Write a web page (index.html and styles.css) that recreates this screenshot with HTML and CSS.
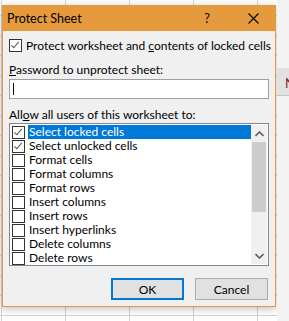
FILE: index.html
```html
<!DOCTYPE html>
<html lang="en">
  <head>
    <meta charset="UTF-8" />
    <meta name="viewport" content="width=device-width, initial-scale=1.0" />
    <title>Protect Sheet</title>
    <link rel="stylesheet" href="styles.css">
  </head>
  <body>
    <div class="screen">
      <div class="dialog">
        <div class="titlebar">
          <span class="title">Protect Sheet</span>
          <span class="help">?</span>
          <span class="close">
            <svg width="11" height="11" viewBox="0 0 11 11">
              <path d="M0.5 0.5 L10.5 10.5 M10.5 0.5 L0.5 10.5" stroke="#000" stroke-width="1.1" fill="none" />
            </svg>
          </span>
        </div>

        <div class="body">
          <div class="check-row top-check">
            <span class="box checked"></span>
            <span>Protect worksheet and <u>c</u>ontents of locked cells</span>
          </div>

          <div class="field-label"><u>P</u>assword to unprotect sheet:</div>
          <div class="input"><span class="caret"></span></div>

          <div class="field-label">All<u>o</u>w all users of this worksheet to:</div>
          <div class="listbox">
            <ul class="items">
              <li class="selected"><span class="box checked"></span><span class="item-text">Select locked cells</span></li>
              <li><span class="box checked"></span><span class="item-text">Select unlocked cells</span></li>
              <li><span class="box"></span><span class="item-text">Format cells</span></li>
              <li><span class="box"></span><span class="item-text">Format columns</span></li>
              <li><span class="box"></span><span class="item-text">Format rows</span></li>
              <li><span class="box"></span><span class="item-text">Insert columns</span></li>
              <li><span class="box"></span><span class="item-text">Insert rows</span></li>
              <li><span class="box"></span><span class="item-text">Insert hyperlinks</span></li>
              <li><span class="box"></span><span class="item-text">Delete columns</span></li>
              <li><span class="box"></span><span class="item-text">Delete rows</span></li>
            </ul>
            <div class="scrollbar">
              <span class="arrow">
                <svg width="9" height="6" viewBox="0 0 9 6"><path d="M0.5 5 L4.5 1 L8.5 5" stroke="#606060" stroke-width="1.6" fill="none" /></svg>
              </span>
              <div class="track"><div class="thumb"></div></div>
              <span class="arrow">
                <svg width="9" height="6" viewBox="0 0 9 6"><path d="M0.5 1 L4.5 5 L8.5 1" stroke="#606060" stroke-width="1.6" fill="none" /></svg>
              </span>
            </div>
          </div>

          <div class="buttons">
            <button class="btn default">OK</button>
            <button class="btn">Cancel</button>
          </div>
        </div>
      </div>

      <div class="sheet-edge">
        <div class="col-header">N</div>
      </div>
    </div>
  </body>
</html>
```

FILE: styles.css
```css
body {
  margin: 0;
  padding: 0;
  font-family: Lato, "Noto Sans", sans-serif;
  font-size: 12px;
  color: #000;
}
.screen {
  width: 289px;
  height: 321px;
  overflow: hidden;
  display: flex;
  background-color: #fff;
  /* worksheet grid behind the dialog */
  background-image:
    linear-gradient(to right, #d4d4d4 1px, transparent 1px),
    linear-gradient(to bottom, #d4d4d4 1px, transparent 1px);
  background-size: 64px 100%, 100% 20px;
  background-position: 1px 0, 0 15px;
}
.dialog {
  flex: none;
  width: 274px;
  height: 302px;
  margin: 5px 0 0 2px;
  background-color: #f0f0f0;
  border: 1px solid #e59b3d;
  border-top: none;
  box-sizing: border-box;
  box-shadow: 0 2px 8px rgba(0, 0, 0, 0.25);
  display: flex;
  flex-direction: column;
  white-space: nowrap;
}
.titlebar {
  height: 26px;
  margin: 0 -1px;
  background-color: #e59b3d;
  display: flex;
  align-items: center;
  padding: 0 0 0 5px;
  font-size: 12.5px;
}
.title {
  flex: 1;
}
.help {
  width: 10px;
  text-align: center;
  margin-right: 36px;
}
.close {
  width: 11px;
  margin-right: 17px;
  display: flex;
}
.body {
  flex: 1;
  padding: 7px 6px 0 6px;
}
.check-row {
  display: flex;
  align-items: center;
  gap: 4px;
  height: 14px;
}
.top-check {
  margin-bottom: 10px;
}
.box {
  width: 11px;
  height: 11px;
  border: 1px solid #333;
  background-color: #fff;
  flex: none;
  position: relative;
}
.checked::after {
  content: "";
  position: absolute;
  left: 3px;
  top: 0px;
  width: 3px;
  height: 7px;
  border: solid #555;
  border-width: 0 1.4px 1.4px 0;
  transform: rotate(40deg);
}
.field-label {
  height: 15px;
  line-height: 15px;
}
.input {
  height: 20px;
  margin: 2px 0 8px;
  border: 1px solid #a0a0a0;
  background-color: #fff;
  box-sizing: border-box;
  padding: 3px 3px;
}
.caret {
  display: block;
  width: 1px;
  height: 12px;
  background-color: #000;
}
.listbox {
  height: 143px;
  margin-top: 1px;
  border: 1px solid #828790;
  background-color: #fff;
  display: flex;
  box-sizing: border-box;
  padding: 1px 1px 1px 2px;
}
.items {
  flex: 1;
  list-style: none;
  margin: 0;
  padding: 0;
}
.items li {
  height: 14px;
  display: flex;
  align-items: center;
  gap: 3px;
}
.item-text {
  flex: 1;
  height: 14px;
  line-height: 14px;
  padding-left: 1px;
}
.selected .item-text {
  background-color: #0078d7;
  color: #fff;
}
.scrollbar {
  width: 16px;
  background-color: #f0f0f0;
  display: flex;
  flex-direction: column;
}
.arrow {
  height: 17px;
  display: flex;
  align-items: center;
  justify-content: center;
}
.track {
  flex: 1;
}
.thumb {
  height: 70px;
  margin: 0 1px;
  background-color: #cdcdcd;
}
.buttons {
  display: flex;
  justify-content: flex-end;
  gap: 11px;
  margin-top: 12px;
  padding-right: 1px;
}
.btn {
  width: 73px;
  height: 22px;
  font-family: inherit;
  font-size: 12px;
  color: #000;
  background-color: #e1e1e1;
  border: 1px solid #adadad;
  padding: 0;
}
.btn.default {
  border: 2px solid #0078d7;
}
.sheet-edge {
  flex: 1;
  margin-left: 1px;
  background-color: #f3f3f3;
  display: flex;
  flex-direction: column;
}
.col-header {
  margin-top: 68px;
  height: 27px;
  line-height: 30px;
  padding-left: 8px;
  background-color: #e1e1e1;
  border-bottom: 1px solid #c6c6c6;
  color: #7b1e1e;
  font-size: 13px;
}
```
